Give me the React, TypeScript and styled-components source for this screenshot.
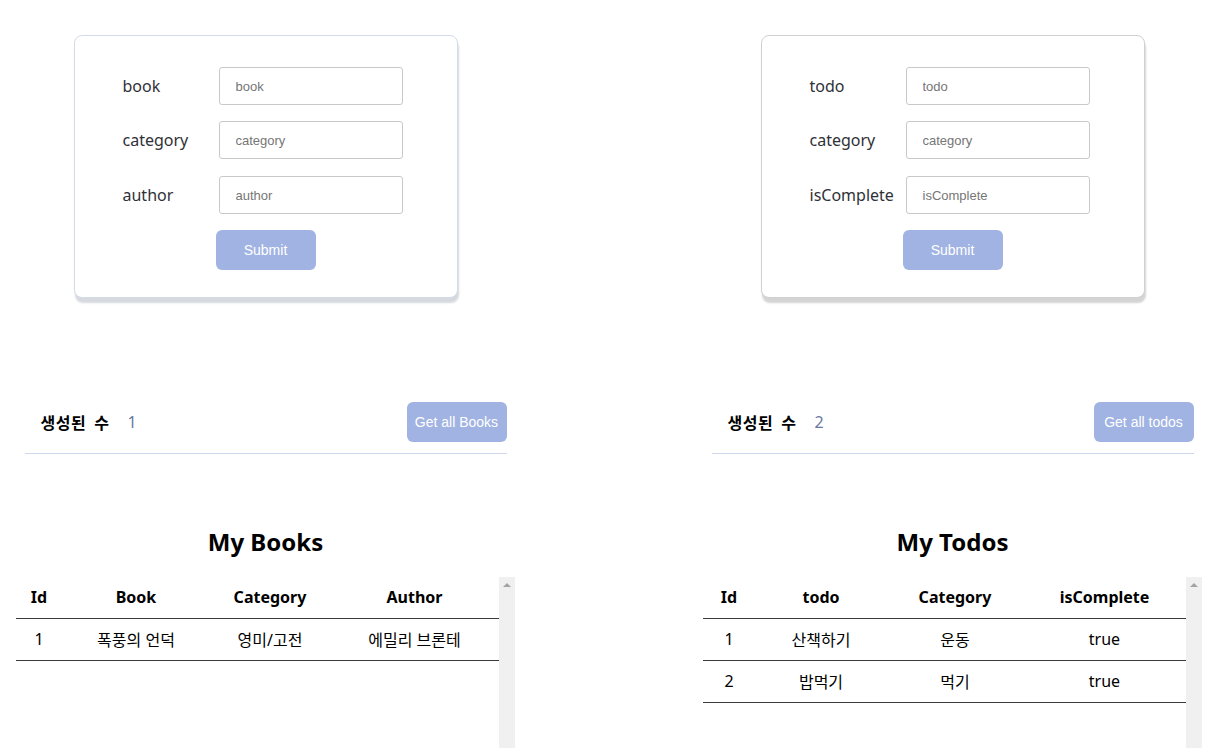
import React from "react";
import styled, { createGlobalStyle } from "styled-components";

const Global = createGlobalStyle`
  html, body { margin: 0; padding: 0; background: #fff; }
  body { font-family: "Noto Sans", "Noto Sans CJK KR", sans-serif; color: #000; overflow: hidden; }
  * { box-sizing: border-box; }
`;

const Page = styled.div`
  display: grid;
  grid-template-columns: 499px 499px;
  column-gap: 188px;
  padding-left: 16px;
  padding-top: 35px;
`;

const Column = styled.section`
  display: flex;
  flex-direction: column;
  align-items: center;
`;

const Card = styled.form<{ $tone: "blue" | "gray" }>`
  width: 384px;
  height: 263px;
  background: #fff;
  border: 1px solid ${(p) => (p.$tone === "blue" ? "#d3dae8" : "#d0d0d0")};
  border-radius: 8px;
  box-shadow: 1px 5px 2px ${(p) => (p.$tone === "blue" ? "#d6dade" : "#d4d4d4")};
  padding: 31px 0 0 48px;
  display: flex;
  flex-direction: column;
`;

const FieldRow = styled.label`
  display: grid;
  grid-template-columns: 96px 184px;
  align-items: center;
  margin-bottom: 16px;
  &:nth-child(3) { margin-top: 1px; }
`;

const LabelText = styled.span`
  font-family: "Noto Sans", "Noto Sans CJK KR", sans-serif;
  font-size: 16px;
  color: #2f3137;
`;

const Input = styled.input`
  width: 184px;
  height: 38px;
  border: 1px solid #c9c9c9;
  border-radius: 3px;
  padding: 0 0 0 16px;
  font-family: "Liberation Sans", Arial, sans-serif;
  font-size: 13px;
  color: #333;
  outline: none;
  &::placeholder { color: #767676; }
`;

const SoftButton = styled.button`
  width: 100px;
  height: 40px;
  border: none;
  border-radius: 6px;
  background: #a0b3e2;
  color: #fff;
  font-family: "Liberation Sans", Arial, sans-serif;
  font-size: 14px;
  cursor: pointer;
`;

const SubmitWrap = styled.div`
  display: flex;
  justify-content: center;
  padding-right: 48px;
`;

const CountBar = styled.div`
  width: 482px;
  margin-top: 104px;
  display: flex;
  align-items: center;
  padding: 0 0 11px 16px;
  border-bottom: 1px solid #cfd7ec;
`;

const CountLabel = styled.span`
  font-family: "Noto Sans CJK KR", sans-serif;
  font-weight: 700;
  font-size: 16px;
  letter-spacing: 0.5px;
  word-spacing: 4px;
  color: #000;
`;

const CountValue = styled.span`
  margin-left: 18px;
  font-family: "Noto Sans", sans-serif;
  font-size: 16px;
  color: #6a78a0;
  flex: 1;
`;

const Title = styled.h2`
  margin: 72px 0 19px;
  font-family: "Noto Sans", "Noto Sans CJK KR", sans-serif;
  font-weight: 700;
  font-size: 24px;
  line-height: 32px;
  color: #000;
`;

const TableBox = styled.div`
  width: 499px;
  height: 172px;
  display: flex;
`;

const Table = styled.table`
  width: 483px;
  height: fit-content;
  border-collapse: collapse;
  table-layout: fixed;
  font-family: "Noto Sans", "Noto Sans CJK KR", sans-serif;
  font-size: 16px;
`;

const Th = styled.th<{ $w: number }>`
  width: ${(p) => p.$w}px;
  height: 41px;
  padding: 0;
  font-weight: 700;
  text-align: center;
  border-bottom: 1px solid #3a3a3a;
`;

const Td = styled.td`
  height: 42px;
  padding: 0;
  text-align: center;
  font-weight: 400;
  border-bottom: 1px solid #3a3a3a;
`;

const ScrollTrack = styled.div`
  width: 16px;
  background: #f0f0f0;
  display: flex;
  justify-content: center;
  padding-top: 6px;
`;

const ScrollArrow = styled.div`
  width: 0;
  height: 0;
  border-left: 4px solid transparent;
  border-right: 4px solid transparent;
  border-bottom: 4px solid #a3a3a3;
`;

type Field = { name: string };

function FormCard({ tone, fields }: { tone: "blue" | "gray"; fields: Field[] }) {
  return (
    <Card $tone={tone} onSubmit={(e) => e.preventDefault()}>
      {fields.map((f) => (
        <FieldRow key={f.name}>
          <LabelText>{f.name}</LabelText>
          <Input placeholder={f.name} />
        </FieldRow>
      ))}
      <SubmitWrap>
        <SoftButton type="submit">Submit</SoftButton>
      </SubmitWrap>
    </Card>
  );
}

function DataTable({ cols, rows }: { cols: { label: string; w: number }[]; rows: string[][] }) {
  return (
    <TableBox>
      <Table>
        <thead>
          <tr>
            {cols.map((c) => (
              <Th key={c.label} $w={c.w}>{c.label}</Th>
            ))}
          </tr>
        </thead>
        <tbody>
          {rows.map((r, i) => (
            <tr key={i}>
              {r.map((c, j) => (
                <Td key={j}>{c}</Td>
              ))}
            </tr>
          ))}
        </tbody>
      </Table>
      <ScrollTrack>
        <ScrollArrow />
      </ScrollTrack>
    </TableBox>
  );
}

export default function App() {
  return (
    <>
      <Global />
      <Page>
        <Column>
          <FormCard tone="blue" fields={[{ name: "book" }, { name: "category" }, { name: "author" }]} />
          <CountBar>
            <CountLabel>생성된 수</CountLabel>
            <CountValue>1</CountValue>
            <SoftButton type="button">Get all Books</SoftButton>
          </CountBar>
          <Title>My Books</Title>
          <DataTable
            cols={[
              { label: "Id", w: 46 },
              { label: "Book", w: 148 },
              { label: "Category", w: 120 },
              { label: "Author", w: 169 },
            ]}
            rows={[["1", "폭풍의 언덕", "영미/고전", "에밀리 브론테"]]}
          />
        </Column>
        <Column>
          <FormCard tone="gray" fields={[{ name: "todo" }, { name: "category" }, { name: "isComplete" }]} />
          <CountBar>
            <CountLabel>생성된 수</CountLabel>
            <CountValue>2</CountValue>
            <SoftButton type="button">Get all todos</SoftButton>
          </CountBar>
          <Title>My Todos</Title>
          <DataTable
            cols={[
              { label: "Id", w: 52 },
              { label: "todo", w: 132 },
              { label: "Category", w: 136 },
              { label: "isComplete", w: 163 },
            ]}
            rows={[
              ["1", "산책하기", "운동", "true"],
              ["2", "밥먹기", "먹기", "true"],
            ]}
          />
        </Column>
      </Page>
    </>
  );
}
